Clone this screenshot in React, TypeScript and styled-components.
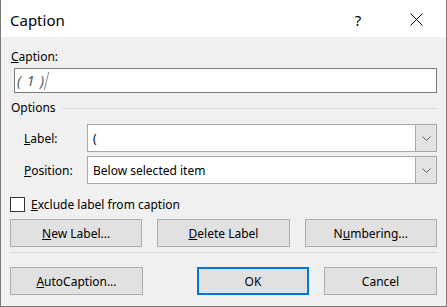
import React from "react";
import styled, { createGlobalStyle } from "styled-components";

const Global = createGlobalStyle`
  html, body {
    margin: 0;
    padding: 0;
    background: #ffffff;
  }
  body {
    font-family: "Segoe UI", "Noto Sans", "Open Sans", sans-serif;
    font-size: 12px;
    color: #000;
  }
`;

const Window = styled.div`
  width: 447px;
  height: 307px;
  box-sizing: border-box;
  border: 1px solid #7a7a7a;
  border-top: none;
  background: #f0f0f0;
  display: flex;
  flex-direction: column;
`;

const TitleBar = styled.div`
  height: 37px;
  background: #ffffff;
  display: flex;
  align-items: center;
  padding-left: 9px;
  padding-top: 2px;
  box-sizing: border-box;
`;

const Title = styled.div`
  font-size: 15px;
  flex: 1;
`;

const HelpMark = styled.div`
  font-size: 15px;
  width: 20px;
  text-align: center;
  margin-right: 41px;
`;

const CloseBox = styled.div`
  width: 14px;
  height: 14px;
  margin-right: 23px;
  display: flex;
  align-items: center;
  justify-content: center;
`;

const Body = styled.div`
  flex: 1;
  padding: 0 9px;
  display: flex;
  flex-direction: column;
`;

const Key = styled.span`
  text-decoration: underline;
  text-underline-offset: 1px;
`;

const FieldLabel = styled.div`
  margin-top: 12px;
  margin-left: 1px;
  line-height: 16px;
`;

const CaptionInput = styled.div`
  margin: 3px 0 0 4px;
  height: 25px;
  box-sizing: border-box;
  border: 1px solid #7a7a7a;
  background: #fff;
  display: flex;
  align-items: center;
  padding-left: 2px;
`;

const CaptionText = styled.span`
  font-style: italic;
  font-size: 14px;
  letter-spacing: 1px;
  color: #4d5a68;
  white-space: pre;
`;

const Caret = styled.span`
  display: inline-block;
  width: 1px;
  height: 18px;
  background: #8a8a8a;
  margin-left: 1px;
  transform: skewX(-14deg);
`;

const GroupHeader = styled.div`
  margin-top: 7px;
  display: flex;
  align-items: center;
  gap: 6px;
  line-height: 16px;
  padding-left: 1px;
`;

const Rule = styled.div`
  flex: 1;
  height: 1px;
  background: #dcdcdc;
`;

const OptionRow = styled.div<{ $top: number }>`
  margin-top: ${(p) => p.$top}px;
  display: flex;
  align-items: center;
`;

const OptionLabel = styled.div`
  width: 77px;
  padding-left: 14px;
  box-sizing: border-box;
`;

const Combo = styled.div`
  flex: 1;
  height: 28px;
  box-sizing: border-box;
  border: 1px solid #a8a8a8;
  background: #fff;
  display: flex;
  align-items: stretch;
`;

const ComboValue = styled.div`
  flex: 1;
  display: flex;
  align-items: center;
  padding-left: 5px;
`;

const DropButton = styled.div`
  width: 20px;
  border-left: 1px solid #a8a8a8;
  background: #e3e3e3;
  display: flex;
  align-items: center;
  justify-content: center;
`;

const CheckRow = styled.div`
  margin-top: 13px;
  display: flex;
  align-items: center;
  gap: 6px;
  height: 15px;
`;

const CheckBox = styled.div`
  width: 15px;
  height: 15px;
  box-sizing: border-box;
  border: 1px solid #333;
  background: #fff;
`;

const ButtonGrid = styled.div`
  margin-top: 7px;
  display: grid;
  grid-template-columns: repeat(3, 1fr);
  gap: 15px;
`;

const Button = styled.div<{ $default?: boolean; $width?: number }>`
  height: 28px;
  box-sizing: border-box;
  ${(p) => (p.$width ? `width: ${p.$width}px;` : "")}
  border: ${(p) => (p.$default ? "2px solid #0078d7" : "1px solid #adadad")};
  background: #e1e1e1;
  display: flex;
  align-items: center;
  justify-content: center;
`;

const Separator = styled.div`
  margin-top: 5px;
  height: 1px;
  background: #dadada;
`;

const BottomRow = styled.div`
  margin-top: 14px;
  display: flex;
  gap: 15px;
`;

const Spacer = styled.div`
  flex: 1;
`;

const Chevron = () => (
  <svg width="9" height="5" viewBox="0 0 9 5">
    <path d="M0.5 0.5 L4.5 4.5 L8.5 0.5" fill="none" stroke="#5a5a5a" strokeWidth="1" />
  </svg>
);

const CloseIcon = () => (
  <svg width="13" height="13" viewBox="0 0 13 13">
    <path d="M0.5 0.5 L12.5 12.5 M12.5 0.5 L0.5 12.5" stroke="#000" strokeWidth="1" />
  </svg>
);

export default function App() {
  return (
    <>
      <Global />
      <Window>
        <TitleBar>
          <Title>Caption</Title>
          <HelpMark>?</HelpMark>
          <CloseBox>
            <CloseIcon />
          </CloseBox>
        </TitleBar>
        <Body>
          <FieldLabel>
            <Key>C</Key>aption:
          </FieldLabel>
          <CaptionInput>
            <CaptionText>( 1 )</CaptionText>
            <Caret />
          </CaptionInput>

          <GroupHeader>
            Options
            <Rule />
          </GroupHeader>
          <OptionRow $top={8}>
            <OptionLabel>
              <Key>L</Key>abel:
            </OptionLabel>
            <Combo>
              <ComboValue>(</ComboValue>
              <DropButton>
                <Chevron />
              </DropButton>
            </Combo>
          </OptionRow>
          <OptionRow $top={4}>
            <OptionLabel>
              <Key>P</Key>osition:
            </OptionLabel>
            <Combo>
              <ComboValue>Below selected item</ComboValue>
              <DropButton>
                <Chevron />
              </DropButton>
            </Combo>
          </OptionRow>

          <CheckRow>
            <CheckBox />
            <span>
              <Key>E</Key>xclude label from caption
            </span>
          </CheckRow>

          <ButtonGrid>
            <Button>
              <span>
                <Key>N</Key>ew Label...
              </span>
            </Button>
            <Button>
              <span>
                <Key>D</Key>elete Label
              </span>
            </Button>
            <Button>
              <span>
                N<Key>u</Key>mbering...
              </span>
            </Button>
          </ButtonGrid>

          <Separator />

          <BottomRow>
            <Button $width={133}>
              <span>
                <Key>A</Key>utoCaption...
              </span>
            </Button>
            <Spacer />
            <Button $default $width={112}>
              OK
            </Button>
            <Button $width={113}>Cancel</Button>
          </BottomRow>
        </Body>
      </Window>
    </>
  );
}
